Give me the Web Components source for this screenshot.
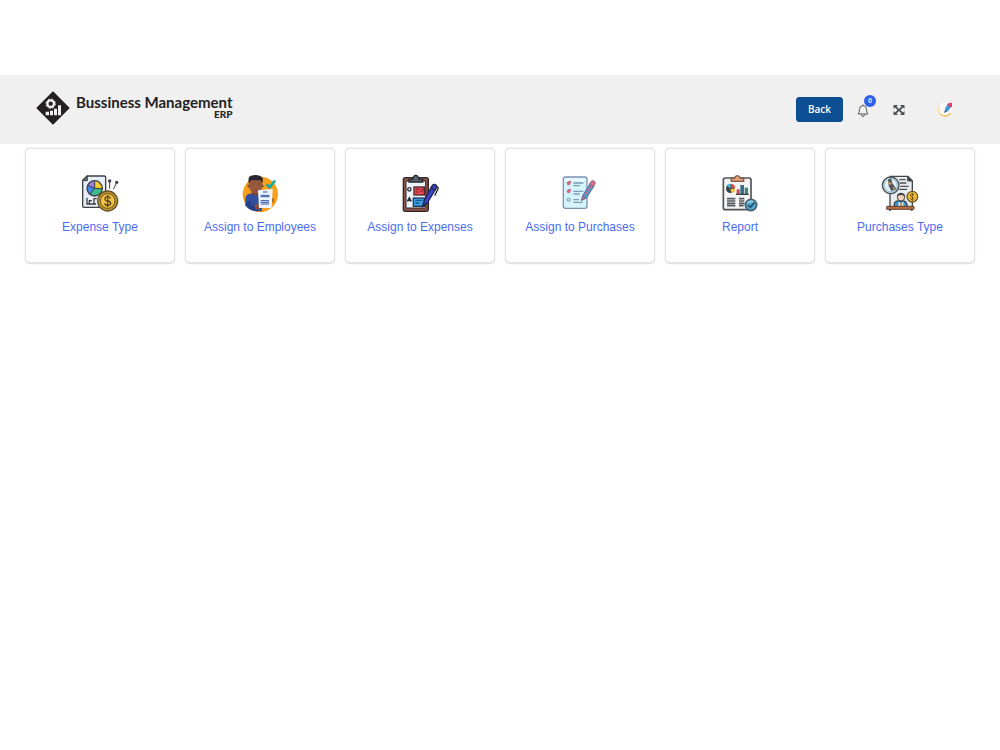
<!DOCTYPE html>
<html lang="en">
<head>
<meta charset="UTF-8">
<meta name="viewport" content="width=device-width, initial-scale=1.0">
<title>Bussiness Management ERP</title>
<style>
    body {
        margin: 0;
        padding-top: 75px;
        background: #fff;
        font-family: "Liberation Sans", Arial, sans-serif;
    }
</style>
</head>
<body>
<erp-header>
    <erp-logo slot="brand"></erp-logo>
    <back-button>Back</back-button>
    <notification-bell count="0"></notification-bell>
    <fullscreen-toggle></fullscreen-toggle>
    <user-avatar></user-avatar>
</erp-header>
<menu-grid>
    <menu-card href="#expense-type" icon="expenseType">Expense Type</menu-card>
    <menu-card href="#assign-employees" icon="employees">Assign to Employees</menu-card>
    <menu-card href="#assign-expenses" icon="expenses">Assign to Expenses</menu-card>
    <menu-card href="#assign-purchases" icon="purchases">Assign to Purchases</menu-card>
    <menu-card href="#report" icon="report">Report</menu-card>
    <menu-card href="#purchases-type" icon="purchasesType">Purchases Type</menu-card>
</menu-grid>

<script>
// Card artwork, all on the same 120 x 120 canvas
const icons = {
    expenseType: `
        <path d="M51 33H103Q107 33 107 37V123Q107 127 103 127H42Q38 127 38 123V46Z" fill="#e9edf5" stroke="#3d4045" stroke-width="4"/>
        <path d="M38 47L52 33V47Z" fill="#6b6e73" stroke="#3d4045" stroke-width="3"/>
        <circle cx="74" cy="70" r="23" fill="#3f86e8"/>
        <path d="M74 70V47A23 23 0 0 1 97 71Z" fill="#f7cf2c"/>
        <path d="M74 70V47A23 23 0 0 0 53 61Z" fill="#a07ce0"/>
        <path d="M74 70L97 71A23 23 0 0 1 60 88Z" fill="#3fb98c"/>
        <path d="M74 47V70L97 71M74 70L53 61M74 70L60 88" fill="none" stroke="#3d4045" stroke-width="3"/>
        <circle cx="74" cy="70" r="23" fill="none" stroke="#3d4045" stroke-width="4"/>
        <path d="M51 98V117H78M58 117V107H66M72 117V101H80" fill="none" stroke="#3d4045" stroke-width="4"/>
        <path d="M119 71V46M130 73L140 53" stroke="#3d4045" stroke-width="3"/>
        <circle cx="119" cy="48" r="5" fill="#3d4045"/><circle cx="140" cy="52" r="5" fill="#3d4045"/>
        <circle cx="113" cy="108" r="30" fill="#bd922c" stroke="#66552b" stroke-width="4"/>
        <circle cx="113" cy="108" r="22" fill="#f3c340" stroke="#66552b" stroke-width="3"/>
        <path d="M121 101Q120 95 113 95Q105 95 105 101Q105 107 113 108Q122 109 122 115Q122 121 113 121Q105 121 104 115M113 90V126" fill="none" stroke="#554625" stroke-width="4"/>`,
    employees: `
        <circle cx="91" cy="88" r="53" fill="#f9a01b"/>
        <path d="M46 122V102Q46 88 60 86L74 82L96 86V139Q62 139 46 122Z" fill="#304f9f"/>
        <path d="M64 76H88V87Q77 96 66 87Z" fill="#79442f"/>
        <rect x="59" y="38" width="36" height="46" rx="15" fill="#995b3e"/>
        <circle cx="57" cy="63" r="5" fill="#8b5038"/><circle cx="96" cy="63" r="5" fill="#8b5038"/>
        <path d="M57 57Q52 37 61 33Q82 26 96 36Q101 44 96 57L92 46H63Z" fill="#292634"/>
        <path d="M66 57H73M82 57H89M72 75Q77 78 82 75" fill="none" stroke="#5b3430" stroke-width="2"/>
        <path d="M46 118Q54 139 84 139V121H62V104" fill="#263f87"/>
        <path d="M78 118Q70 118 76 132L88 134V117ZM126 99Q137 101 128 115Z" fill="#8b5038"/>
        <path d="M84 76L128 72L125 129H87Z" fill="#edf3ff"/>
        <path d="M99 81H112M92 91H118M92 95H118M92 107H117M92 112H117M92 117H117" stroke="#3557a4" stroke-width="3"/>
        <path d="M110 58L119 67L135 47" fill="none" stroke="#17a99d" stroke-width="8"/>`,
    expenses: `
        <rect x="40" y="38" width="75" height="101" rx="6" fill="#8c5446" stroke="#302727" stroke-width="4"/>
        <path d="M48 48H107V129H48Z" fill="#edf3f7" stroke="#302b31" stroke-width="3"/>
        <path d="M57 51V43H68Q70 31 77 31Q85 31 87 43H98V51Z" fill="#59636c" stroke="#252a31" stroke-width="4"/>
        <circle cx="58" cy="73" r="5" fill="#fff" stroke="#292e36" stroke-width="4"/>
        <path d="M52 109L58 98L64 109M54 107H62" fill="none" stroke="#292e36" stroke-width="4"/>
        <rect x="72" y="66" width="31" height="24" fill="#ef4750" stroke="#4a2930" stroke-width="4"/>
        <path d="M77 73H89M77 81H85M91 81L101 70" stroke="#8d2632" stroke-width="4"/>
        <rect x="70" y="99" width="33" height="25" fill="#3c9ee1" stroke="#233c5c" stroke-width="4"/>
        <path d="M76 106H97M76 114H88" stroke="#1d5b96" stroke-width="4"/>
        <path d="M98 124L102 109L125 64Q131 55 138 60Q142 65 138 71L111 115Z" fill="#3945cc" stroke="#252653" stroke-width="4"/>
        <path d="M123 67L134 76M138 61L145 69L134 92M97 124L105 116" fill="none" stroke="#252735" stroke-width="4"/>`,
    purchases: `
        <rect x="40" y="36" width="71" height="94" rx="6" fill="#d5f4fb" stroke="#7d93b5" stroke-width="4"/>
        <path d="M45 41H106V48H45Z" fill="#eafcff"/>
        <g fill="#f16d85" stroke="#9d7691" stroke-width="2"><circle cx="56" cy="55" r="5"/><circle cx="56" cy="79" r="5"/></g>
        <circle cx="56" cy="104" r="5" fill="#b9e3ef" stroke="#8098b6" stroke-width="3"/>
        <path d="M54 55L62 48M54 79L62 72" stroke="#d84b6c" stroke-width="4"/>
        <path d="M70 54H100M70 62H90M70 79H100M70 87H89M70 104H87M70 112H98" stroke="#7c9cb9" stroke-width="4"/>
        <path d="M95 106L99 90L121 55L132 63L110 98Z" fill="#4aa7d8" stroke="#566b91" stroke-width="3"/>
        <path d="M95 106L98 94L107 99ZM119 57L124 49Q128 45 133 49Q138 53 134 59L130 65Z" fill="#e96d85" stroke="#746585" stroke-width="3"/>
        <path d="M104 93L125 60" stroke="#df5378" stroke-width="4"/>`,
    report: `
        <rect x="40" y="39" width="83" height="95" rx="6" fill="#f4f4f4" stroke="#505459" stroke-width="5"/>
        <path d="M64 49V39H74Q76 32 82 32Q88 32 91 39H101V49Z" fill="#e4a072" stroke="#765a50" stroke-width="4"/>
        <circle cx="61" cy="71" r="13" fill="#38424b"/>
        <path d="M61 71L50 60A15 15 0 0 1 62 56Z" fill="#52b9d9"/>
        <path d="M64 68V56A14 14 0 0 1 76 68Z" fill="#e64d50"/>
        <path d="M61 73L75 70A14 14 0 0 1 65 85Z" fill="#f3c63a"/>
        <path d="M80 73H89V87H80Z" fill="#ce4950"/><path d="M91 60H102V87H91Z" fill="#376f8b"/><path d="M104 68H114V87H104Z" fill="#418579"/>
        <path d="M78 88H116" stroke="#373f47" stroke-width="4"/>
        <path d="M51 101H76M51 108H76M51 115H76M51 122H76M87 101H103M87 108H103M87 115H103M87 122H101" stroke="#55595f" stroke-width="5"/>
        <circle cx="123" cy="120" r="17" fill="#55a7d2" stroke="#455c6c" stroke-width="5"/>
        <path d="M114 120L121 127L133 113" fill="none" stroke="#294f68" stroke-width="5"/>
        <path d="M112 114Q122 105 130 111" fill="none" stroke="#a4d8ed" stroke-width="4"/>`,
    purchasesType: `
        <path d="M60 34H114L127 47V127H60Z" fill="#e9ecee" stroke="#44484d" stroke-width="4"/>
        <path d="M113 34V48H127Z" fill="#414448" stroke="#44484d" stroke-width="3"/>
        <path d="M88 44H107M89 54H109M91 64H116M88 73H111" stroke="#4c5156" stroke-width="4"/>
        <circle cx="62" cy="61" r="25" fill="#c1dbe6" stroke="#46515a" stroke-width="4"/>
        <circle cx="62" cy="61" r="19" fill="#e1f1f5" stroke="#94acb8" stroke-width="2"/>
        <path d="M54 44L63 40L67 55L80 73L64 78L56 63Z" fill="#51565e"/>
        <path d="M56 50L65 55L61 60L55 57ZM68 66L76 70L71 75Z" fill="#e19d4e"/>
        <path d="M73 125V114Q77 108 84 108H100Q111 109 112 125Z" fill="#4198cf" stroke="#354a62" stroke-width="4"/>
        <path d="M86 108L93 119L100 108V125H86Z" fill="#eff5f6"/><path d="M91 114H96L98 125H90Z" fill="#dc914e"/>
        <circle cx="93" cy="97" r="11" fill="#f0d2b9" stroke="#454248" stroke-width="3"/>
        <path d="M81 95Q80 84 93 83Q106 84 105 96Q99 87 93 91Q87 88 81 95Z" fill="#444147"/>
        <circle cx="127" cy="95" r="16" fill="#f1bd35" stroke="#6b582e" stroke-width="4"/>
        <path d="M132 89Q120 84 121 92Q122 95 128 96Q135 102 128 104Q122 104 120 100M127 83V108" fill="none" stroke="#725a25" stroke-width="3"/>
        <path d="M60 125V137M125 125V137" stroke="#4b3830" stroke-width="6"/>
        <rect x="50" y="124" width="82" height="9" rx="1" fill="#bd6d43" stroke="#604337" stroke-width="3"/>`
};

class ErpHeader extends HTMLElement {
    connectedCallback() {
        this.attachShadow({ mode: 'open' });
        this.shadowRoot.innerHTML = `
            <style>
                :host {
                    display: block;
                    background: #f0f0f0;
                }
                header {
                    display: flex;
                    align-items: center;
                    justify-content: space-between;
                    min-height: 69px;
                    padding: 0 47px 0 36px;
                }
                .actions {
                    display: flex;
                    align-items: center;
                }
            </style>
            <header>
                <slot name="brand"></slot>
                <div class="actions"><slot></slot></div>
            </header>
        `;
    }
}

class ErpLogo extends HTMLElement {
    connectedCallback() {
        this.attachShadow({ mode: 'open' });
        this.shadowRoot.innerHTML = `
            <style>
                :host {
                    display: flex;
                    align-items: center;
                    gap: 6px;
                    padding-bottom: 4px;
                    color: #242122;
                    font-family: Lato, sans-serif;
                    font-weight: 700;
                }
                .name {
                    display: flex;
                    flex-direction: column;
                    font-size: 15px;
                    line-height: 13px;
                }
                .sub {
                    align-self: flex-end;
                    font-size: 10px;
                    font-weight: 900;
                    line-height: 10px;
                }
            </style>
            <svg width="34" height="34" viewBox="48 62 102 102" aria-hidden="true">
                <path d="M99 66L146 113L99 160L52 113Z" fill="#242122" stroke="#242122" stroke-width="5" stroke-linejoin="round"/>
                <circle cx="92" cy="100" r="10" fill="none" stroke="#f0f0f0" stroke-width="7"/>
                <circle cx="92" cy="100" r="14" fill="none" stroke="#f0f0f0" stroke-width="3" stroke-dasharray="6 5"/>
                <path d="M77 124H87V135H77ZM90 121H99V135H90ZM102 115H111V135H102ZM114 105H123V135H114Z" fill="#f0f0f0"/>
            </svg>
            <div class="name">
                <span>Bussiness Management</span>
                <span class="sub">ERP</span>
            </div>
        `;
    }
}

class BackButton extends HTMLElement {
    connectedCallback() {
        this.attachShadow({ mode: 'open' });
        this.shadowRoot.innerHTML = `
            <style>
                :host { display: block; margin-right: 14px; }
                button {
                    display: block;
                    width: 47px;
                    height: 25px;
                    padding: 0 0 2px;
                    border: 1px solid #0c4c8f;
                    border-radius: 3px;
                    background: #0d4f94;
                    color: #fff;
                    font: 600 10px "Open Sans", sans-serif;
                    cursor: pointer;
                }
            </style>
            <button type="button"><slot></slot></button>
        `;
        this.shadowRoot.querySelector('button').addEventListener('click', () => history.back());
    }
}

class NotificationBell extends HTMLElement {
    connectedCallback() {
        this.attachShadow({ mode: 'open' });
        this.shadowRoot.innerHTML = `
            <style>
                :host { display: block; margin-right: 24px; }
                button {
                    position: relative;
                    display: block;
                    padding: 2px 0 0;
                    border: 0;
                    background: none;
                    cursor: pointer;
                }
                svg { display: block; }
                .badge {
                    position: absolute;
                    top: -7px;
                    right: -7px;
                    width: 12px;
                    height: 12px;
                    border-radius: 50%;
                    background: #2f5ee8;
                    color: #dce5ff;
                    font: 700 7px/12px "Open Sans", sans-serif;
                    text-align: center;
                }
            </style>
            <button type="button" aria-label="Notifications">
                <svg width="12" height="13" viewBox="0 0 24 26" fill="none" stroke="#53575b" stroke-width="2" stroke-linejoin="round">
                    <path d="M12 1V3M2 20Q5 18 5 11Q5 3 12 3Q19 3 19 11Q19 18 22 20Z"/>
                    <path d="M9 21Q9 25 12 25Q15 25 15 21"/>
                </svg>
                <span class="badge">${this.getAttribute('count')}</span>
            </button>
        `;
    }
}

class FullscreenToggle extends HTMLElement {
    connectedCallback() {
        this.attachShadow({ mode: 'open' });
        this.shadowRoot.innerHTML = `
            <style>
                :host { display: block; margin-right: 32px; }
                button {
                    display: block;
                    padding: 0;
                    border: 0;
                    background: none;
                    cursor: pointer;
                }
                svg { display: block; }
            </style>
            <button type="button" aria-label="Full screen">
                <svg width="12" height="12" viewBox="0 0 24 24" fill="#4b4f53">
                    <path d="M1 2H10L7 5L12 10L17 5L14 2H23V10L20 7L15 12L20 17L23 14V22H14L17 19L12 14L7 19L10 22H1V14L4 17L9 12L4 7L1 10Z"/>
                </svg>
            </button>
        `;
    }
}

class UserAvatar extends HTMLElement {
    connectedCallback() {
        this.attachShadow({ mode: 'open' });
        this.shadowRoot.innerHTML = `
            <style>
                :host { display: block; }
                button {
                    display: block;
                    padding: 0;
                    border: 0;
                    background: none;
                    cursor: pointer;
                }
                svg { display: block; }
            </style>
            <button type="button" aria-label="Account">
                <svg width="16" height="16" viewBox="0 0 48 48">
                    <circle cx="24" cy="24" r="21" fill="#faf9f7"/>
                    <path d="M8 12Q-1 28 12 38" fill="none" stroke="#f5d9a0" stroke-width="4"/>
                    <path d="M10 37Q26 50 42 34" fill="none" stroke="#f1b950" stroke-width="4"/>
                    <path d="M22 32L25 17L33 5L43 13L33 28Z" fill="#3c9ad5"/>
                    <path d="M31 7Q35 0 45 3V14L39 17Z" fill="#dc3f72"/>
                    <path d="M22 32L24 25L29 29Z" fill="#525962"/>
                </svg>
            </button>
        `;
    }
}

class MenuGrid extends HTMLElement {
    connectedCallback() {
        this.attachShadow({ mode: 'open' });
        this.shadowRoot.innerHTML = `
            <style>
                :host { display: block; }
                nav {
                    display: grid;
                    grid-template-columns: repeat(auto-fit, minmax(140px, 1fr));
                    gap: 10px;
                    padding: 4px 25px;
                }
            </style>
            <nav><slot></slot></nav>
        `;
    }
}

class MenuCard extends HTMLElement {
    connectedCallback() {
        this.attachShadow({ mode: 'open' });
        this.shadowRoot.innerHTML = `
            <style>
                :host { display: block; }
                a {
                    display: flex;
                    flex-direction: column;
                    align-items: center;
                    gap: 5px;
                    padding: 24px 8px 26px;
                    border: 1px solid #e2e4e8;
                    border-bottom-width: 2px;
                    border-radius: 5px;
                    background: #fff;
                    box-shadow: 0 0 2px #d8dade, inset 0 0 1px #e2e4e8;
                    color: #4a6cf0;
                    font-size: 12px;
                    line-height: 18px;
                    text-align: center;
                    text-decoration: none;
                }
                a:hover { border-color: #4a6cf0; }
            </style>
            <a href="${this.getAttribute('href')}">
                <svg width="40" height="40" viewBox="30 24 120 120" aria-hidden="true">${icons[this.getAttribute('icon')]}</svg>
                <span><slot></slot></span>
            </a>
        `;
    }
}

customElements.define('erp-header', ErpHeader);
customElements.define('erp-logo', ErpLogo);
customElements.define('back-button', BackButton);
customElements.define('notification-bell', NotificationBell);
customElements.define('fullscreen-toggle', FullscreenToggle);
customElements.define('user-avatar', UserAvatar);
customElements.define('menu-grid', MenuGrid);
customElements.define('menu-card', MenuCard);
</script>
</body>
</html>
